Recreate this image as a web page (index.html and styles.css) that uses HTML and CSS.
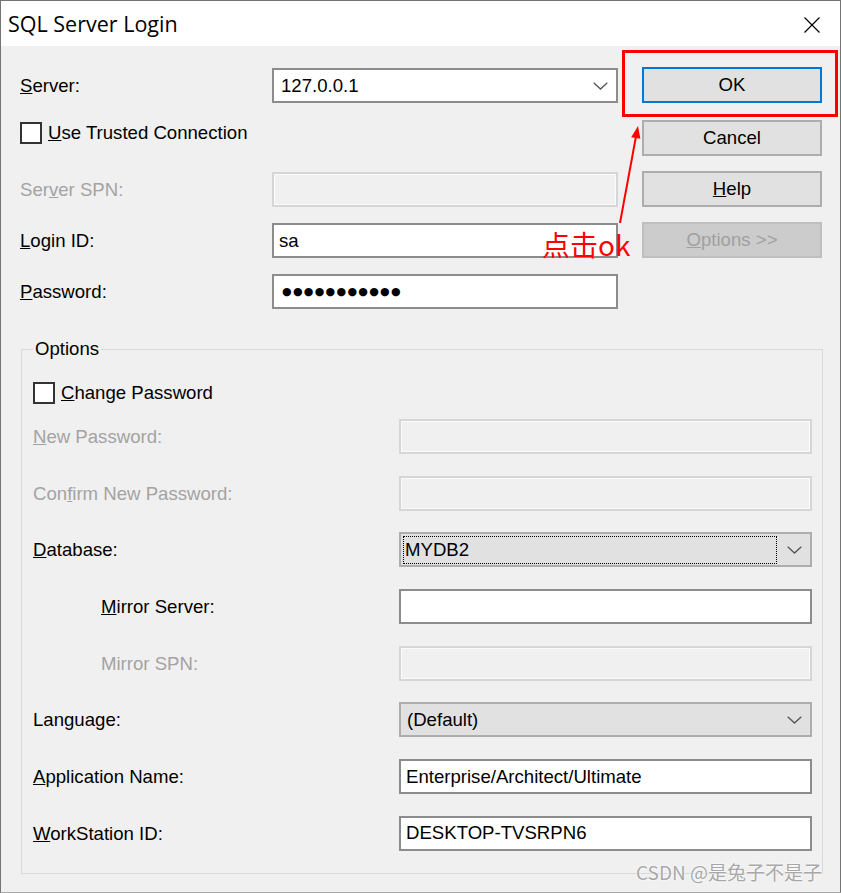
FILE: index.html
```html
<!DOCTYPE html>
<html>
<head>
<meta charset="utf-8">
<title>SQL Server Login</title>
<link rel="stylesheet" href="styles.css">
</head>
<body>
<div class="window">
  <div class="titlebar">
    <span class="title">SQL Server Login</span>
    <span class="close"><svg width="16" height="16" viewBox="0 0 16 16"><path d="M0.5 0.5 L15.5 15.5 M15.5 0.5 L0.5 15.5" stroke="#000" stroke-width="1.2" fill="none"/></svg></span>
  </div>
  <div class="content">
    <div class="top">
      <div class="form">
        <span class="lbl"><u>S</u>erver:</span>
        <div class="combo white r1"><span class="val">127.0.0.1</span><svg class="chev" width="15" height="8" viewBox="0 0 15 8"><polyline points="0.7,0.7 7.5,7 14.3,0.7" fill="none" stroke="#555" stroke-width="1.3"/></svg></div>
        <div class="check-row span2"><span class="box"></span><span><u>U</u>se Trusted Connection</span></div>
        <span class="lbl dis">Ser<u>v</u>er SPN:</span>
        <div class="field dis"></div>
        <span class="lbl"><u>L</u>ogin ID:</span>
        <div class="field"><span class="val">sa</span></div>
        <span class="lbl"><u>P</u>assword:</span>
        <div class="field"><span class="dots">●●●●●●●●●●●</span></div>
      </div>
      <div class="buttons">
        <div class="btn ok">OK</div>
        <div class="btn cancel">Cancel</div>
        <div class="btn"><u>H</u>elp</div>
        <div class="btn off"><u>O</u>ptions &gt;&gt;</div>
      </div>
    </div>
    <fieldset class="group">
      <legend>Options</legend>
      <div class="check-row cp"><span class="box"></span><span><u>C</u>hange Password</span></div>
      <div class="grid">
        <span class="lbl dis"><u>N</u>ew Password:</span>
        <div class="field dis"></div>
        <span class="lbl dis">Con<u>f</u>irm New Password:</span>
        <div class="field dis"></div>
        <span class="lbl"><u>D</u>atabase:</span>
        <div class="combo gray"><span class="focus">MYDB2</span><svg class="chev" width="15" height="8" viewBox="0 0 15 8"><polyline points="0.7,0.7 7.5,7 14.3,0.7" fill="none" stroke="#555" stroke-width="1.3"/></svg></div>
        <span class="lbl ind"><u>M</u>irror Server:</span>
        <div class="field"></div>
        <span class="lbl ind dis">Mirror SPN:</span>
        <div class="field dis"></div>
        <span class="lbl">Language:</span>
        <div class="combo gray"><span class="val">(Default)</span><svg class="chev" width="15" height="8" viewBox="0 0 15 8"><polyline points="0.7,0.7 7.5,7 14.3,0.7" fill="none" stroke="#555" stroke-width="1.3"/></svg></div>
        <span class="lbl"><u>A</u>pplication Name:</span>
        <div class="field"><span class="val">Enterprise/Architect/Ultimate</span></div>
        <span class="lbl"><u>W</u>orkStation ID:</span>
        <div class="field"><span class="val">DESKTOP-TVSRPN6</span></div>
      </div>
    </fieldset>
  </div>
  <div class="mark-box"></div>
  <svg class="mark-arrow" width="40" height="110" viewBox="610 120 40 110"><line x1="620" y1="223" x2="635.8" y2="137.5" stroke="#f00" stroke-width="2"/><polygon points="638,126 640.4,138.8 631.2,137.2" fill="#f00"/></svg>
  <span class="mark-text">点击ok</span>
  <span class="watermark">CSDN @是兔子不是子</span>
</div>
</body>
</html>
```
FILE: styles.css
```css
html, body { margin: 0; padding: 0; background: #f0f0f0; }
.window {
  position: relative;
  width: 841px;
  height: 893px;
  box-sizing: border-box;
  border: 1px solid #747474;
  border-bottom-color: #a8a8a8;
  background: #f0f0f0;
  font-family: "Liberation Sans", Arial, sans-serif;
  font-size: 18.6px;
  color: #000;
}
.titlebar {
  height: 45px;
  background: #fff;
  display: flex;
  align-items: center;
  justify-content: space-between;
  padding-left: 7px;
}
.title { font-family: "Open Sans", "Noto Sans", sans-serif; font-size: 21.5px; padding-bottom: 1px; }
.close { width: 56px; height: 45px; display: flex; align-items: center; justify-content: center; padding-top: 2px; box-sizing: border-box; }
.close svg { display: block; }
.top { display: flex; padding: 22px 0 0 19px; }
.form {
  display: grid;
  grid-template-columns: 252px 346px;
  grid-template-rows: 36px 36px 35px 35px 35px;
  row-gap: 16px;
}
.lbl { align-self: start; height: 35px; line-height: 35px; white-space: nowrap; }
.lbl.dis { color: #a3a3a3; }
.lbl.ind { padding-left: 68px; }
.span2 { grid-column: 1 / 3; }
.check-row { display: flex; align-items: center; gap: 6px; height: 22px; margin-top: 2px; white-space: nowrap; }
.box { width: 22px; height: 22px; box-sizing: border-box; border: 2px solid #333; background: #fff; flex: none; }
.field, .combo {
  height: 35px;
  box-sizing: border-box;
  border: 2px solid #8c8c8c;
  background: #fff;
  display: flex;
  align-items: center;
  padding: 0 8px 0 5px;
  white-space: nowrap;
}
.field.dis { border-color: #d6d6d6; background: #f0f0f0; box-shadow: inset 0 0 0 1px #fbfbfb; }
.combo { justify-content: space-between; }
.combo.gray { background: #e1e1e1; border-color: #adadad; padding-left: 2px; }
.combo.gray .val { padding-left: 4px; }
.r1 { padding-left: 7px; }
.chev { display: block; flex: none; }
.focus {
  flex: 1;
  margin-right: 10px;
  height: 28px;
  line-height: 26px;
  box-sizing: border-box;
  border: 1px dotted #000;
  padding-left: 1px;
}
.dots { font-family: "DejaVu Sans", sans-serif; font-size: 11px; letter-spacing: 1.3px; padding-left: 3px; }
.buttons { display: flex; flex-direction: column; margin-left: 24px; margin-top: -1px; gap: 15px; }
.btn {
  width: 180px;
  height: 36px;
  box-sizing: border-box;
  border: 2px solid #adadad;
  background: #e1e1e1;
  display: flex;
  align-items: center;
  justify-content: center;
}
.btn.ok { border-color: #0078d7; }
.btn.cancel { margin-top: 2px; }
.btn.off { background: #cccccc; border-color: #bfbfbf; color: #a0a0a0; }
.group {
  margin: 30px 17px 0 20px;
  padding: 23px 10px 22px 11px;
  border: 1px solid #d9d9d9;
}
.group legend { padding: 0 2px; line-height: 20px; }
.cp { margin-top: 0; margin-bottom: 15px; }
.grid {
  display: grid;
  grid-template-columns: 366px 413px;
  grid-auto-rows: 35px;
  row-gap: 21.7px;
}
.mark-box {
  position: absolute;
  left: 621px;
  top: 49px;
  width: 216px;
  height: 67px;
  box-sizing: border-box;
  border: 3px solid #ff0000;
}
.mark-arrow { position: absolute; left: 609px; top: 119px; }
.mark-text {
  position: absolute;
  left: 541px;
  top: 227px;
  font-family: "Noto Sans CJK SC", sans-serif;
  font-size: 28px;
  line-height: 1.2;
  color: #ff0000;
}
.watermark {
  position: absolute;
  left: 635px;
  top: 858px;
  font-family: "Noto Sans CJK SC", sans-serif;
  font-size: 19px;
  line-height: 26px;
  color: #a8a8a8;
  text-shadow: 0 0 2px #fff, 0 0 2px #fff;
}
```
